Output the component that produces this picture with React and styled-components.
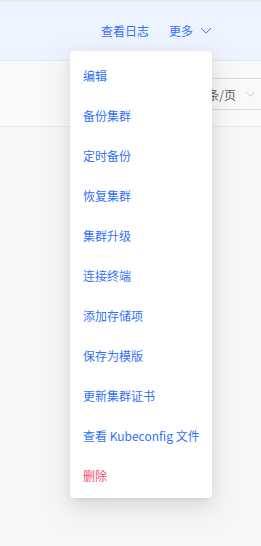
import React from "react";
import styled, { createGlobalStyle } from "styled-components";

const Global = createGlobalStyle`
  html, body { margin: 0; padding: 0; }
  body {
    font-family: "Noto Sans CJK SC", "Noto Sans", sans-serif;
    background: #f7f7f7;
  }
`;

const Page = styled.div`
  position: relative;
  width: 261px;
  height: 546px;
  overflow: hidden;
  background: #f7f7f7;
`;

const TopLine = styled.div`
  height: 2px;
  background: #e9e9ea;
`;

const Header = styled.div`
  height: 58px;
  background: #eef4ff;
  border-bottom: 1px solid #e4e9f2;
  display: flex;
  align-items: center;
  justify-content: flex-end;
  gap: 20px;
  padding-right: 50px;
`;

const HeaderLink = styled.span`
  display: inline-flex;
  align-items: center;
  gap: 8px;
  font-size: 12px;
  color: #3471f9;
  line-height: 1;
`;

const Row = styled.div`
  height: 66px;
  background: #f9f9f9;
  border-bottom: 1px solid #ececec;
  display: flex;
  justify-content: flex-end;
  padding-top: 17px;
  box-sizing: border-box;
`;

const Select = styled.div`
  width: 120px;
  height: 32px;
  margin-right: -10px;
  box-sizing: border-box;
  border: 1px solid #dcdcdc;
  border-radius: 4px;
  display: flex;
  align-items: center;
  justify-content: flex-end;
  gap: 10px;
  padding-right: 15px;
  font-size: 12px;
  color: #5c5c5c;
`;

const Menu = styled.ul`
  position: absolute;
  left: 70px;
  top: 51px;
  width: 142px;
  margin: 0;
  padding: 4px 0 3px;
  list-style: none;
  background: #fff;
  border-radius: 4px;
  box-shadow: 0 6px 16px 0 rgba(0, 0, 0, 0.08),
    0 3px 6px -4px rgba(0, 0, 0, 0.12), 0 9px 28px 8px rgba(0, 0, 0, 0.05);
`;

const Item = styled.li`
  height: 40px;
  display: flex;
  align-items: center;
  padding-left: 13px;
  font-size: 12px;
  white-space: nowrap;
  color: ${(p) => (p.$danger ? "#f0506a" : "#3471f9")};
`;

const Chevron = ({ color, w = 10, h = 6 }) => (
  <svg width={w} height={h} viewBox="0 0 10 6" fill="none">
    <polyline
      points="0.5,0.5 5,5.2 9.5,0.5"
      stroke={color}
      strokeWidth="1"
      strokeLinecap="round"
      strokeLinejoin="round"
    />
  </svg>
);

const items = [
  "编辑",
  "备份集群",
  "定时备份",
  "恢复集群",
  "集群升级",
  "连接终端",
  "添加存储项",
  "保存为模版",
  "更新集群证书",
  "查看 Kubeconfig 文件",
];

export default function App() {
  return (
    <Page>
      <Global />
      <TopLine />
      <Header>
        <HeaderLink>查看日志</HeaderLink>
        <HeaderLink>
          更多
          <Chevron color="#3471f9" />
        </HeaderLink>
      </Header>
      <Row>
        <Select>
          10 条/页
          <Chevron color="#c4c4c4" w={9} h={5} />
        </Select>
      </Row>
      <Menu>
        {items.map((t) => (
          <Item key={t}>{t}</Item>
        ))}
        <Item $danger>删除</Item>
      </Menu>
    </Page>
  );
}
